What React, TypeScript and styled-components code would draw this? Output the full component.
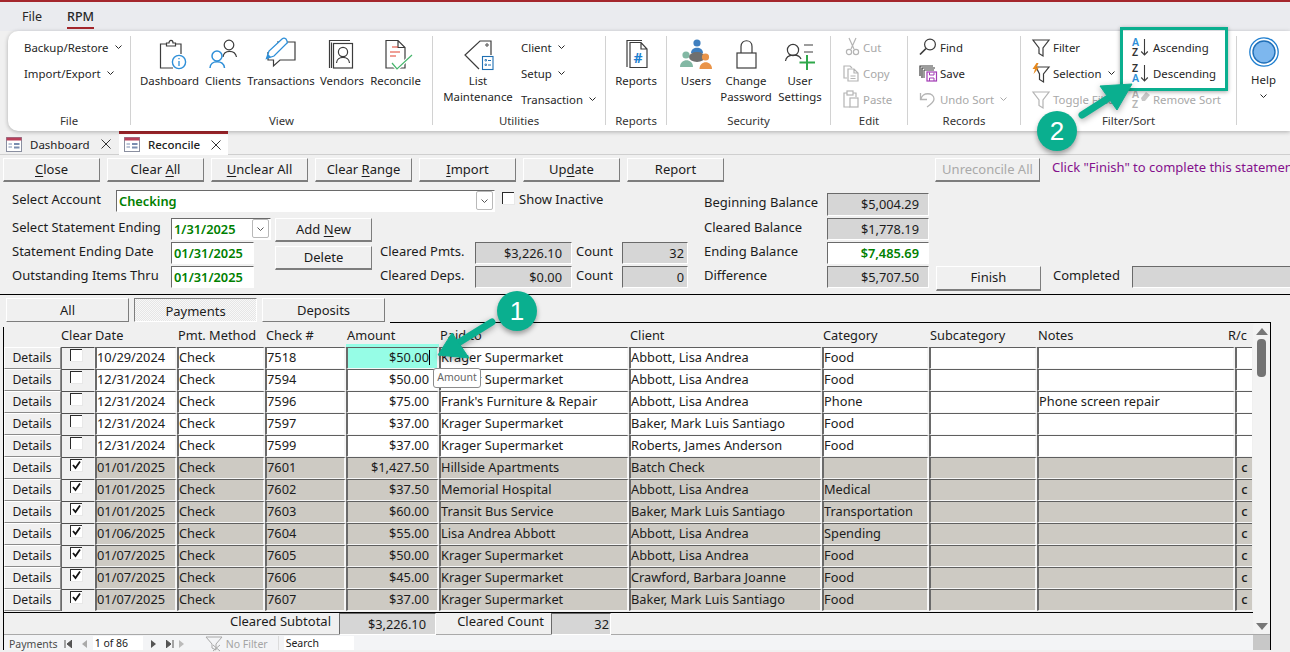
import React from "react";
import styled, { createGlobalStyle } from "styled-components";

const FONT = `"Noto Sans", "Open Sans", "Liberation Sans", sans-serif`;
const RED = "#a4262c";
const TEAL = "#0aaf8f";
const BLUE = "#2e8fd8";
const INK = "#3c3c3c";
const OFF = "#b4b4b4";

const Global = createGlobalStyle`
  html, body { margin: 0; padding: 0; background: #f0f0f0; }
  * { box-sizing: border-box; }
`;

const Page = styled.div`
  position: relative;
  width: 1290px;
  height: 652px;
  overflow: hidden;
  background: #f0f0f0;
  font-family: ${FONT};
  font-size: 13px;
  color: #1c1c1c;
`;

/* ---------- top menu ---------- */
const MenuBar = styled.div`
  display: flex;
  height: 31px;
  padding-left: 22px;
  gap: 25px;
  background: #eaebef;
  border-top: 2px solid ${RED};
`;
const MenuItem = styled.div<{ $on?: boolean }>`
  height: 27px;
  padding-top: 6px;
  font-size: 12.5px;
  line-height: 17px;
  color: #262626;
  font-weight: ${(p) => (p.$on ? 500 : 400)};
  border-bottom: ${(p) => (p.$on ? `2px solid ${RED}` : "2px solid transparent")};
`;

/* ---------- ribbon ---------- */
const Ribbon = styled.div`
  position: relative;
  z-index: 2;
  display: flex;
  height: 100px;
  margin-left: 8px;
  background: #fff;
  border-radius: 10px 0 0 10px;
  box-shadow: 0 1px 4px rgba(0, 0, 0, 0.28);
  color: #262626;
  font-size: 11.4px;
`;
const Group = styled.div<{ $w: number }>`
  display: flex;
  flex-direction: column;
  flex: none;
  width: ${(p) => p.$w}px;
`;
const GroupBody = styled.div<{ $pad?: number; $gap?: number }>`
  display: flex;
  flex: 1;
  padding-left: ${(p) => p.$pad ?? 0}px;
  gap: ${(p) => p.$gap ?? 0}px;
  min-height: 0;
`;
const GroupLabel = styled.div`
  height: 18px;
  line-height: 16px;
  text-align: center;
  color: #333;
`;
const Sep = styled.div`
  flex: none;
  width: 1px;
  margin: 5px 0 6px;
  background: #d2d2d2;
`;
const Large = styled.div<{ $w: number }>`
  display: flex;
  flex-direction: column;
  align-items: center;
  flex: none;
  width: ${(p) => p.$w}px;
  padding-top: 7px;
  line-height: 16px;
  text-align: center;
  white-space: nowrap;
`;
const IconBox = styled.div`
  height: 35px;
  width: 32px;
`;
const Icon = styled.svg`
  display: block;
  overflow: visible;
  fill: none;
`;
const SmallCol = styled.div<{ $w?: number }>`
  display: flex;
  flex-direction: column;
  flex: none;
  width: ${(p) => (p.$w ? `${p.$w}px` : "auto")};
  padding-top: 3px;
`;
const SmallRow = styled.div<{ $off?: boolean }>`
  display: flex;
  align-items: center;
  height: 26px;
  gap: 3px;
  white-space: nowrap;
  color: ${(p) => (p.$off ? "#a8a8a8" : "#262626")};
`;
const SmallIcon = styled.div`
  flex: none;
  width: 18px;
  height: 20px;
`;
const Chevron = styled.svg`
  flex: none;
  width: 7px;
  height: 4px;
  margin-left: 3px;
  fill: none;
  stroke: currentColor;
  stroke-width: 1;
`;
const HelpChevron = styled(Chevron)`
  margin: 6px 0 0;
`;

const Chev = () => (
  <Chevron viewBox="0 0 7 4">
    <path d="M0.5 0.5L3.5 3.5L6.5 0.5" />
  </Chevron>
);

const S = (p: { children: React.ReactNode; w?: number; h?: number }) => (
  <Icon width={p.w ?? 18} height={p.h ?? 20} viewBox={`0 0 ${p.w ?? 18} ${p.h ?? 20}`}>
    {p.children}
  </Icon>
);

const L = (p: { children: React.ReactNode }) => (
  <Icon width={32} height={32} viewBox="0 0 32 32">
    {p.children}
  </Icon>
);

const DashboardIcon = () => (
  <L>
    <g stroke={INK} strokeWidth="1.2">
      <path d="M12.5 6H6.5V30H19" />
      <path d="M21.5 6H27V16" />
      <path d="M12.5 8V5H15C15 1.5 19 1.5 19 5H21.5V8Z" />
    </g>
    <circle cx="25" cy="24" r="6.6" fill="#fff" stroke={BLUE} strokeWidth="1.4" />
    <path d="M25 23V28M25 20V21.2" stroke={BLUE} strokeWidth="1.3" />
  </L>
);
const ClientsIcon = () => (
  <L>
    <circle cx="22" cy="7" r="4.8" stroke={INK} strokeWidth="1.2" />
    <path d="M16 19C17 11.5 28 11.5 29.5 19" stroke={INK} strokeWidth="1.2" />
    <circle cx="10" cy="18" r="5" fill="#fff" stroke={BLUE} strokeWidth="1.5" />
    <path d="M3 30C3 21.5 17 21.5 17.5 30" stroke={BLUE} strokeWidth="1.5" />
  </L>
);
const TransactionsIcon = () => (
  <L>
    <path d="M12 4H30V22H15L8.5 28V22H3V14" stroke={INK} strokeWidth="1.2" />
    <path d="M1.5 20.5L4 13L17 1Q19-.6 21 1L22 3Q23 5 21 6L9 18Z" fill="#fff" stroke={BLUE} strokeWidth="1.3" />
    <path d="M1.5 20.5L3 16L6 19Z" fill={BLUE} />
  </L>
);
const VendorsIcon = () => (
  <L>
    <g stroke={INK} strokeWidth="1.2">
      <path d="M3.5 30V2.5H24" />
      <path d="M5.5 30V4.5" />
      <rect x="7.5" y="5.5" width="19" height="24.5" />
      <circle cx="17" cy="14" r="4.6" />
      <path d="M10.5 25C11 17.5 23 17.5 23.5 25" />
    </g>
  </L>
);
const ReconcileIcon = () => (
  <L>
    <path d="M6 2.5H18L25 9.5V30H6Z M18 2.5V9.5H25" stroke={INK} strokeWidth="1.2" />
    <path d="M12 9H18M10 14H20M10 18H16" stroke="#e0402e" strokeWidth="1.2" />
    <path d="M12 25L17 31L32 17" stroke="#fff" strokeWidth="3.5" />
    <path d="M12 25L17 31L32 17" stroke="#46b56c" strokeWidth="1.2" />
  </L>
);
const ListIcon = () => (
  <L>
    <path d="M17 31L3 17L18 3H29V17" stroke={INK} strokeWidth="1.2" />
    <circle cx="25" cy="7" r="1.2" stroke={INK} />
    <rect x="20.5" y="18.5" width="10.5" height="13" fill="#fff" stroke="#1f6fb2" strokeWidth="1.1" />
    <path d="M23 21.5H24.5V23H23ZM23 26H24.5V27.5H23Z" stroke="#1f6fb2" strokeWidth=".8" />
    <path d="M26 22.5H29M26 27H29" stroke="#1f6fb2" />
  </L>
);
const ReportsIcon = () => (
  <L>
    <path d="M7 29V2.5H22" stroke={INK} strokeWidth="1.2" />
    <path d="M10 4.5H21L27 11V29.5H10Z M21 4.5V11H27" stroke={INK} strokeWidth="1.2" />
    <text x="18" y="25" textAnchor="middle" fontFamily={FONT} fontSize="14" fontWeight="700" fill="#1c7fd0">
      #
    </text>
  </L>
);
const UsersIcon = () => (
  <L>
    <circle cx="17" cy="5" r="3.6" fill="#3f7fbf" />
    <path d="M11 15C11 8 23 8 23 15Z" fill="#3f7fbf" />
    <circle cx="6" cy="17" r="3.6" fill="#82b8a4" />
    <path d="M0 29C0 20 13 20 13 29Z" fill="#82b8a4" />
    <ellipse cx="17" cy="19" rx="8" ry="5" fill="#6f6f6f" />
    <circle cx="25.5" cy="19" r="3.6" fill="#ea9448" />
    <path d="M19.5 31C19.5 22 32 22 32 31Z" fill="#ea9448" />
  </L>
);
const LockIcon = () => (
  <L>
    <rect x="7" y="15" width="19" height="15" stroke={INK} strokeWidth="1.2" />
    <path d="M11 15V8.5C11 .8 22 .8 22 8.5V15" stroke={INK} strokeWidth="1.2" />
  </L>
);
const UserSettingsIcon = () => (
  <L>
    <circle cx="9" cy="12" r="5.6" stroke={INK} strokeWidth="1.2" />
    <path d="M1.5 23C2.5 15.5 15 15.5 17 21" stroke={INK} strokeWidth="1.2" />
    <path d="M20 7H29M20 14H29" stroke={INK} strokeWidth="1.2" />
    <path d="M23 17V32M15.5 24.5H31" stroke="#2ea84a" strokeWidth="2" />
  </L>
);
const CutIcon = () => (
  <S>
    <g stroke={OFF} strokeWidth="1.2">
      <path d="M7 1L12 12M14 1L9 12" />
      <circle cx="7" cy="15" r="2.6" />
      <circle cx="14" cy="15" r="2.6" />
    </g>
  </S>
);
const CopyIcon = () => (
  <S>
    <g stroke={OFF} strokeWidth="1.2">
      <path d="M5 15H2V3H8L10 5" />
      <path d="M6 6H12L16 10V18H6Z M12 6V10H16" fill="#fff" />
      <path d="M8.5 13H13.5M8.5 15.5H13.5" />
    </g>
  </S>
);
const PasteIcon = () => (
  <S>
    <g stroke={OFF} strokeWidth="1.2">
      <path d="M5 4H2V18H8" />
      <path d="M11 4H14V8" />
      <rect x="5" y="2" width="6" height="4" />
      <rect x="8" y="9" width="8" height="9" fill="#fff" />
    </g>
  </S>
);
const FindIcon = () => (
  <S>
    <circle cx="11" cy="7.5" r="5.4" stroke={INK} strokeWidth="1.2" />
    <path d="M7 11.5L1 17.5" stroke={INK} strokeWidth="1.7" />
  </S>
);
const SaveIcon = () => (
  <S>
    <path d="M1 13V3H14M3 15V5H16" stroke={INK} strokeWidth="1.2" />
    <path d="M5 15V7H15" stroke={INK} strokeWidth="1" />
    <rect x="8" y="9" width="9.5" height="9" fill="#fff" stroke="#a23bb5" strokeWidth="1.2" />
    <path d="M10.5 9.5V12H15V9.5M10.5 18V15H15V18" stroke="#a23bb5" />
  </S>
);
const UndoIcon = () => (
  <S>
    <path d="M2 10C3 3 15 3 15 10C15 13 11 16 8 18" stroke={OFF} strokeWidth="1.3" />
    <path d="M1.5 4V10.5H8" stroke={OFF} strokeWidth="1.3" />
  </S>
);
const FunnelPath = "M1 3H17L11 11V19L7 16.5V11Z";
const FilterIcon = ({ off }: { off?: boolean }) => (
  <S>
    <path d={FunnelPath} stroke={off ? OFF : INK} strokeWidth="1.2" />
  </S>
);
const SelectionIcon = () => (
  <S>
    <path d="M4 4H17L11.5 11V19L7.5 16.5V11Z" stroke={INK} strokeWidth="1.2" />
    <path d="M4.5 0L0.5 6H3L1.5 11L7 4.5H4.5L6.5 0Z" fill="#e8891c" />
  </S>
);
const SortLetters = styled.text<{ $c: string }>`
  font-family: ${FONT};
  font-size: 10.5px;
  font-weight: 600;
  fill: ${(p) => p.$c};
`;
const SortIcon = ({ first, second, fa, fb }: { first: string; second: string; fa: string; fb: string }) => (
  <S>
    <SortLetters $c={fa} x="0" y="9">
      {first}
    </SortLetters>
    <SortLetters $c={fb} x="0" y="19">
      {second}
    </SortLetters>
    <path d="M12.5 2V18M9.2 14.5L12.5 18L15.8 14.5" stroke={INK} strokeWidth="1.1" />
  </S>
);
const RemoveSortIcon = () => (
  <S>
    <SortLetters $c={OFF} x="0" y="9">
      A
    </SortLetters>
    <SortLetters $c={OFF} x="0" y="19">
      Z
    </SortLetters>
    <path d="M9 9L14 3L18 6L13 12H10Z" fill="#c8c8c8" />
  </S>
);
const HelpIcon = () => (
  <Icon width={32} height={32} viewBox="0 0 32 32">
    <circle cx="16" cy="16" r="14.2" stroke="#1f7fd0" strokeWidth="1.3" fill="#fff" />
    <circle cx="16" cy="16" r="11" fill="#7db7ee" stroke="#1f6fb8" strokeWidth="1.4" />
  </Icon>
);

const HelpBox = styled.div`
  display: flex;
  flex-direction: column;
  align-items: center;
  width: 53px;
  padding-top: 5px;
  line-height: 16px;
`;
const HelpText = styled.div`
  margin-top: 4px;
`;

/* ---------- document tabs ---------- */
const DocTabs = styled.div`
  display: flex;
  height: 24px;
  border-bottom: 1px solid #cfcfcf;
  background: #f0f0f0;
  font-size: 11.5px;
`;
const DocTab = styled.div<{ $on?: boolean; $w: number }>`
  display: flex;
  align-items: center;
  flex: none;
  width: ${(p) => p.$w}px;
  height: ${(p) => (p.$on ? "24px" : "23px")};
  margin-left: ${(p) => (p.$on ? "1px" : "0")};
  padding-left: ${(p) => (p.$on ? "5px" : "6px")};
  gap: 8px;
  background: ${(p) => (p.$on ? "#fff" : "transparent")};
  border-top: 3px solid ${(p) => (p.$on ? RED : "transparent")};
  font-weight: ${(p) => (p.$on ? 500 : 400)};
  color: #222;
`;
const DocClose = styled.svg`
  flex: none;
  width: 10px;
  height: 10px;
  margin-left: auto;
  margin-right: 7px;
  stroke: #333;
  stroke-width: 1;
`;
const FormIcon = () => (
  <Icon width={16} height={15} viewBox="0 0 16 15">
    <rect x=".5" y=".5" width="15" height="14" fill="#fff" stroke="#8a8fa0" />
    <rect x=".5" y=".5" width="15" height="3" fill="#b9405a" stroke="none" />
    <path d="M2.5 7H6M2.5 10H6" stroke="#7a8db0" />
    <rect x="8" y="6" width="5.5" height="2" fill="#7a8db0" />
    <rect x="8" y="9.5" width="5.5" height="2" fill="#7a8db0" />
  </Icon>
);

/* ---------- form header ---------- */
const FormHead = styled.div`
  height: 140px;
  border-bottom: 1px solid #000;
  overflow: hidden;
`;
const Toolbar = styled.div`
  display: flex;
  align-items: flex-start;
  gap: 7px;
  padding: 3px 0 0 3px;
  height: 27px;
`;
const RaisedBtn = styled.div<{ $w?: number; $h?: number; $off?: boolean; $ml?: number }>`
  flex: none;
  width: ${(p) => p.$w ?? 97}px;
  height: ${(p) => p.$h ?? 24}px;
  margin-left: ${(p) => p.$ml ?? 0}px;
  padding-bottom: 2px;
  display: flex;
  align-items: center;
  justify-content: center;
  background: #f0f0f0;
  border-top: 1px solid #fff;
  border-left: 1px solid #fff;
  border-right: 1px solid #7d7d7d;
  border-bottom: 2px solid #7d7d7d;
  color: ${(p) => (p.$off ? "#a9a9a9" : "#1c1c1c")};
  white-space: nowrap;
  u { text-underline-offset: 2px; }
`;
const Message = styled.div`
  flex: none;
  margin: 0 0 0 5px;
  line-height: 18px;
  color: #84108c;
  white-space: nowrap;
`;
const FormBody = styled.div`
  display: flex;
  align-items: flex-start;
  margin-top: 8px;
  padding-left: 12px;
`;
const LeftCol = styled.div`
  flex: none;
  width: 680px;
`;
const AccountRow = styled.div`
  display: flex;
  align-items: flex-start;
  height: 22px;
`;
const Label = styled.div<{ $w?: number }>`
  flex: none;
  width: ${(p) => (p.$w ? `${p.$w}px` : "auto")};
  line-height: 18px;
  white-space: nowrap;
`;
const Sunken = styled.div<{
  $w?: number;
  $bg?: string;
  $right?: boolean;
  $ink?: string;
  $bold?: boolean;
  $h?: number;
  $pr?: number;
  $ml?: number;
}>`
  display: flex;
  align-items: center;
  justify-content: ${(p) => (p.$right ? "flex-end" : "flex-start")};
  flex: none;
  width: ${(p) => (p.$w ? `${p.$w}px` : "100%")};
  height: ${(p) => p.$h ?? 22}px;
  margin-left: ${(p) => p.$ml ?? 0}px;
  padding: 0 ${(p) => p.$pr ?? 3}px 1px 2px;
  background: ${(p) => p.$bg ?? "#fff"};
  border-top: 1px solid #6a6a6a;
  border-left: 1px solid #6a6a6a;
  border-right: 1px solid #fff;
  border-bottom: 1px solid #fff;
  color: ${(p) => p.$ink ?? "#1c1c1c"};
  font-weight: ${(p) => (p.$bold ? 600 : 400)};
  font-size: 12.8px;
  white-space: nowrap;
  overflow: hidden;
`;
const DropBtn = styled.div`
  display: flex;
  align-items: center;
  justify-content: center;
  flex: none;
  margin-left: auto;
  margin-right: -2px;
  width: 17px;
  height: 19px;
  background: #fff;
  border: 1px solid #b9b9b9;
  border-radius: 2px;
  color: #555;
  svg { margin: 0; }
`;
const CheckBoxOuter = styled.div`
  flex: none;
  width: 12px;
  height: 12px;
  background: #fff;
  border-top: 1px solid #2a2a2a;
  border-left: 1px solid #2a2a2a;
  box-shadow: 1px 1px 0 #e8e8e8;
`;
const InactiveBox = styled(CheckBoxOuter)`
  margin: 2px 5px 0 7px;
`;
const LowerGrid = styled.div`
  display: grid;
  grid-template-columns: 159px 104px 97px 8px 95px 97px 50px 66px;
  grid-template-rows: repeat(3, 24px);
  margin-top: 6px;
`;
const GridLabel = styled.div<{ $col?: number }>`
  grid-column: ${(p) => p.$col ?? "auto"};
  line-height: 18px;
  white-space: nowrap;
`;
const CountLabel = styled(GridLabel)`
  padding-left: 4px;
`;
const BtnStack = styled.div`
  grid-column: 3;
  grid-row: 1 / 4;
  display: flex;
  flex-direction: column;
  gap: 4px;
`;
const BalanceGrid = styled.div`
  flex: none;
  display: grid;
  grid-template-columns: 123px 102px;
  grid-template-rows: 25px 24px 24px 24px;
  margin: 3px 0 0 12px;
`;
const BalanceLabel = styled.div`
  line-height: 18px;
  white-space: nowrap;
`;
const FinishBlock = styled.div`
  flex: none;
  display: flex;
  align-items: flex-start;
  margin: 76px 0 0 7px;
`;
const CompletedLabel = styled.div`
  flex: none;
  width: 79px;
  margin-left: 12px;
  line-height: 18px;
`;

/* ---------- tabs ---------- */
const TabRow = styled.div`
  display: flex;
  height: 28px;
  padding: 3px 0 0 6px;
  gap: 5px;
`;
const PageTab = styled.div<{ $on?: boolean }>`
  flex: none;
  display: flex;
  align-items: center;
  justify-content: center;
  width: 123px;
  height: 24px;
  padding-top: ${(p) => (p.$on ? "2px" : "0")};
  background: ${(p) =>
    p.$on ? "repeating-conic-gradient(#e6e6e6 0 25%, #f8f8f8 0 50%) 0 0 / 2px 2px" : "#f0f0f0"};
  border-top: 1px solid ${(p) => (p.$on ? "#7d7d7d" : "#fff")};
  border-left: 1px solid ${(p) => (p.$on ? "#7d7d7d" : "#fff")};
  border-right: 1px solid ${(p) => (p.$on ? "#fff" : "#7d7d7d")};
  border-bottom: 1px solid ${(p) => (p.$on ? "#fff" : "#7d7d7d")};
`;
const TabLine = styled.div`
  flex: none;
  width: 881px;
  height: 25px;
  border-bottom: 1px solid #000;
`;

/* ---------- subform ---------- */
const Subform = styled.div`
  position: relative;
  width: 1268px;
  margin-left: 3px;
  border-left: 1px solid #000;
  border-right: 1px solid #000;
  &::before {
    content: "";
    position: absolute;
    left: -1px;
    top: 0;
    width: 1px;
    height: 4px;
    background: #f0f0f0;
  }
`;
const SubformMain = styled.div`
  display: flex;
  height: 311px;
`;
const GridArea = styled.div`
  flex: none;
  width: 1249px;
`;
const COLS = "57px 34px 82px 88px 81px 93px 190px 193px 107px 108px 198px 17px";
const HeadRow = styled.div`
  display: grid;
  grid-template-columns: ${COLS};
  height: 24px;
  align-items: center;
  font-size: 12.8px;
`;
const HeadCell = styled.div<{ $rc?: boolean; $inset?: boolean }>`
  white-space: nowrap;
  justify-self: start;
  padding-left: ${(p) => (p.$inset ? "1px" : "0")};
  margin-left: ${(p) => (p.$rc ? "-7px" : "0")};
`;
const Row = styled.div`
  display: grid;
  grid-template-columns: ${COLS};
  height: 22px;
  font-size: 12.8px;
`;
const DetailsCell = styled.div`
  display: flex;
  align-items: center;
  justify-content: center;
  padding: 0 1px 2px 0;
  font-size: 12.2px;
  background: #f0f0f0;
  border-top: 1px solid #fff;
  border-left: 1px solid #fff;
  border-right: 1px solid #8a8a8a;
  border-bottom: 1px solid #8a8a8a;
`;
const CheckCell = styled.div`
  display: flex;
  justify-content: center;
  padding: 1px 5px 0 0;
  border-top: 1px solid #4f4f4f;
  border-left: 1px solid #6a6a6a;
  border-right: 1px solid #f6f6f6;
  background: #f0f0f0;
`;
const Tick = styled.svg`
  display: block;
  width: 11px;
  height: 11px;
  fill: none;
  stroke: #111;
  stroke-width: 1.8;
`;
const Cell = styled.div<{ $done?: boolean; $right?: boolean; $active?: boolean }>`
  display: flex;
  align-items: center;
  justify-content: ${(p) => (p.$right ? "flex-end" : "flex-start")};
  padding: 0 ${(p) => (p.$right ? "8px" : "1px")} 2px 0;
  background: ${(p) => (p.$active ? "#96fde6" : p.$done ? "#cdcac3" : "#fff")};
  box-shadow: ${(p) => (p.$active ? "0 -3px 0 #96fde6" : "none")};
  border-top: 1px solid #5f5f5f;
  border-left: 2px solid #6a6a6a;
  border-right: 2px solid #f6f6f6;
  border-bottom: 1px solid #f6f6f6;
  white-space: nowrap;
  overflow: hidden;
`;
const RcCell = styled(Cell)`
  justify-content: center;
  padding-right: 0;
  border-right: none;
  font-weight: 500;
`;
const Caret = styled.span`
  display: inline-block;
  width: 1px;
  height: 15px;
  margin-right: -1px;
  background: #000;
`;
const FootRow = styled.div`
  display: flex;
  height: 23px;
  border-top: 1px solid #000;
  margin-top: 1px;
`;
const FootLabel = styled.div<{ $w?: number; $ml?: number }>`
  flex: none;
  width: ${(p) => p.$w}px;
  margin-left: ${(p) => p.$ml ?? 0}px;
  line-height: 16px;
  text-align: right;
  white-space: nowrap;
`;
const ScrollCol = styled.div`
  flex: none;
  width: 17px;
  display: flex;
  flex-direction: column;
  align-items: center;
  padding: 5px 0 4px;
  background: #f3f3f3;
  border-radius: 4px;
`;
const Thumb = styled.div`
  width: 9px;
  height: 38px;
  margin-top: 4px;
  border-radius: 4px;
  background: #737373;
`;
const Tri = styled.div<{ $down?: boolean }>`
  flex: none;
  width: 0;
  height: 0;
  border-left: 6px solid transparent;
  border-right: 6px solid transparent;
  ${(p) => (p.$down ? "border-top: 7px solid #777; margin-top: auto;" : "border-bottom: 7px solid #777;")}
`;
const NavBar = styled.div`
  display: flex;
  align-items: flex-end;
  height: 16px;
  background: #f3f4f6;
  border-top: 1px solid #a9a9a9;
  font-size: 10.5px;
  line-height: 14px;
  color: #4c4c4c;
`;
const NavText = styled.div<{ $ml?: number; $off?: boolean }>`
  flex: none;
  margin: 0 0 -1px ${(p) => p.$ml ?? 0}px;
  color: ${(p) => (p.$off ? "#a4a4a4" : "#4c4c4c")};
  white-space: nowrap;
`;
const NavInput = styled.div<{ $ml: number; $w: number }>`
  flex: none;
  margin-left: ${(p) => p.$ml}px;
  width: ${(p) => p.$w}px;
  height: 14px;
  padding-left: 2px;
  background: #fff;
  color: #222;
`;
const NavGlyph = styled.svg<{ $ml: number }>`
  flex: none;
  margin: 0 0 2px ${(p) => p.$ml}px;
  width: 8px;
  height: 8px;
`;
const NavFilter = styled.svg`
  flex: none;
  margin: 0 0 -2px 18px;
  width: 18px;
  height: 16px;
  fill: none;
  stroke: #a8a8a8;
`;
const NavDivider = styled.div<{ $ml: number }>`
  flex: none;
  width: 1px;
  height: 14px;
  margin-left: ${(p) => p.$ml}px;
  background: #dcdcdc;
`;
const NavCorner = styled.div`
  margin-left: auto;
  flex: none;
  width: 17px;
  height: 15px;
  background: #c8c8c8;
`;

/* ---------- overlays ---------- */
const Highlight = styled.div`
  position: absolute;
  z-index: 5;
  left: 1120px;
  top: 27px;
  width: 108px;
  height: 64px;
  border: 3px solid ${TEAL};
  box-shadow: 0 1px 4px rgba(0, 0, 0, 0.35);
`;
const Overlay = styled.svg`
  position: absolute;
  z-index: 6;
  left: 0;
  top: 0;
  width: 1290px;
  height: 652px;
  pointer-events: none;
  filter: drop-shadow(0 2px 3px rgba(0, 0, 0, 0.35));
`;
const Badge = styled.div<{ $x: number; $y: number }>`
  position: absolute;
  z-index: 7;
  left: ${(p) => p.$x - 20}px;
  top: ${(p) => p.$y - 20}px;
  width: 40px;
  height: 40px;
  border-radius: 50%;
  display: flex;
  align-items: center;
  justify-content: center;
  background: ${TEAL};
  color: #fff;
  font-family: "Liberation Sans", Arial, sans-serif;
  font-size: 26px;
  box-shadow: 0 3px 5px rgba(0, 0, 0, 0.35);
`;
const Tooltip = styled.div`
  position: absolute;
  z-index: 4;
  left: 433px;
  top: 368px;
  width: 48px;
  height: 20px;
  background: #fff;
  border: 1px solid #8c8c8c;
  border-radius: 3px;
  font-size: 10.5px;
  line-height: 17px;
  text-align: center;
  color: #666;
`;

type Rec = { d: string; n: string; a: string; p: string; c: string; k?: string; note?: string; done?: boolean };
const K = "Krager Supermarket";
const A = "Abbott, Lisa Andrea";
const B = "Baker, Mark Luis Santiago";
const rows: Rec[] = [
  { d: "10/29/2024", n: "7518", a: "$50.00", p: K, c: A, k: "Food" },
  { d: "12/31/2024", n: "7594", a: "$50.00", p: K, c: A, k: "Food" },
  { d: "12/31/2024", n: "7596", a: "$75.00", p: "Frank's Furniture & Repair", c: A, k: "Phone", note: "Phone screen repair" },
  { d: "12/31/2024", n: "7597", a: "$37.00", p: K, c: B, k: "Food" },
  { d: "12/31/2024", n: "7599", a: "$37.00", p: K, c: "Roberts, James Anderson", k: "Food" },
  { d: "01/01/2025", n: "7601", a: "$1,427.50", p: "Hillside Apartments", c: "Batch Check", done: true },
  { d: "01/01/2025", n: "7602", a: "$37.50", p: "Memorial Hospital", c: A, k: "Medical", done: true },
  { d: "01/01/2025", n: "7603", a: "$60.00", p: "Transit Bus Service", c: B, k: "Transportation", done: true },
  { d: "01/06/2025", n: "7604", a: "$55.00", p: "Lisa Andrea Abbott", c: A, k: "Spending", done: true },
  { d: "01/07/2025", n: "7605", a: "$50.00", p: K, c: A, k: "Food", done: true },
  { d: "01/07/2025", n: "7606", a: "$45.00", p: K, c: "Crawford, Barbara Joanne", k: "Food", done: true },
  { d: "01/07/2025", n: "7607", a: "$37.00", p: K, c: B, k: "Food", done: true },
];

const heads = ["", "Clear", "Date", "Pmt. Method", "Check #", "Amount", "Paid to", "Client", "Category", "Subcategory", "Notes"];

const X = () => (
  <DocClose viewBox="0 0 10 10">
    <path d="M0.5 0.5L9.5 9.5M9.5 0.5L0.5 9.5" />
  </DocClose>
);

const DropChevron = () => (
  <DropBtn>
    <Chevron viewBox="0 0 7 4">
      <path d="M0.5 0.5L3.5 3.5L6.5 0.5" />
    </Chevron>
  </DropBtn>
);

export default function App() {
  return (
    <Page>
      <Global />
      <MenuBar>
        <MenuItem>File</MenuItem>
        <MenuItem $on>RPM</MenuItem>
      </MenuBar>

      <Ribbon>
        <Group $w={122}>
          <GroupBody $pad={16}>
            <SmallCol>
              <SmallRow>Backup/Restore<Chev /></SmallRow>
              <SmallRow>Import/Export<Chev /></SmallRow>
            </SmallCol>
          </GroupBody>
          <GroupLabel>File</GroupLabel>
        </Group>
        <Sep />
        <Group $w={301}>
          <GroupBody $pad={10} $gap={7}>
            <Large $w={57}><IconBox><DashboardIcon /></IconBox>Dashboard</Large>
            <Large $w={36}><IconBox><ClientsIcon /></IconBox>Clients</Large>
            <Large $w={66}><IconBox><TransactionsIcon /></IconBox>Transactions</Large>
            <Large $w={42}><IconBox><VendorsIcon /></IconBox>Vendors</Large>
            <Large $w={51}><IconBox><ReconcileIcon /></IconBox>Reconcile</Large>
          </GroupBody>
          <GroupLabel>View</GroupLabel>
        </Group>
        <Sep />
        <Group $w={172}>
          <GroupBody $pad={10} $gap={8}>
            <Large $w={70}><IconBox><ListIcon /></IconBox>List<br />Maintenance</Large>
            <SmallCol>
              <SmallRow>Client<Chev /></SmallRow>
              <SmallRow>Setup<Chev /></SmallRow>
              <SmallRow>Transaction<Chev /></SmallRow>
            </SmallCol>
          </GroupBody>
          <GroupLabel>Utilities</GroupLabel>
        </Group>
        <Sep />
        <Group $w={60}>
          <GroupBody>
            <Large $w={60}><IconBox><ReportsIcon /></IconBox>Reports</Large>
          </GroupBody>
          <GroupLabel>Reports</GroupLabel>
        </Group>
        <Sep />
        <Group $w={163}>
          <GroupBody $pad={7} $gap={6}>
            <Large $w={44}><IconBox><UsersIcon /></IconBox>Users</Large>
            <Large $w={44}><IconBox><LockIcon /></IconBox>Change<br />Password</Large>
            <Large $w={52}><IconBox><UserSettingsIcon /></IconBox>User<br />Settings</Large>
          </GroupBody>
          <GroupLabel>Security</GroupLabel>
        </Group>
        <Sep />
        <Group $w={76}>
          <GroupBody $pad={11}>
            <SmallCol>
              <SmallRow $off><SmallIcon><CutIcon /></SmallIcon>Cut</SmallRow>
              <SmallRow $off><SmallIcon><CopyIcon /></SmallIcon>Copy</SmallRow>
              <SmallRow $off><SmallIcon><PasteIcon /></SmallIcon>Paste</SmallRow>
            </SmallCol>
          </GroupBody>
          <GroupLabel>Edit</GroupLabel>
        </Group>
        <Sep />
        <Group $w={112}>
          <GroupBody $pad={11}>
            <SmallCol>
              <SmallRow><SmallIcon><FindIcon /></SmallIcon>Find</SmallRow>
              <SmallRow><SmallIcon><SaveIcon /></SmallIcon>Save</SmallRow>
              <SmallRow $off><SmallIcon><UndoIcon /></SmallIcon>Undo Sort<Chev /></SmallRow>
            </SmallCol>
          </GroupBody>
          <GroupLabel>Records</GroupLabel>
        </Group>
        <Sep />
        <Group $w={215}>
          <GroupBody $pad={11}>
            <SmallCol $w={100}>
              <SmallRow><SmallIcon><FilterIcon /></SmallIcon>Filter</SmallRow>
              <SmallRow><SmallIcon><SelectionIcon /></SmallIcon>Selection<Chev /></SmallRow>
              <SmallRow $off><SmallIcon><FilterIcon off /></SmallIcon>Toggle Filter</SmallRow>
            </SmallCol>
            <SmallCol>
              <SmallRow><SmallIcon><SortIcon first="A" second="Z" fa="#2e8fd8" fb="#333" /></SmallIcon>Ascending</SmallRow>
              <SmallRow><SmallIcon><SortIcon first="Z" second="A" fa="#333" fb="#2e8fd8" /></SmallIcon>Descending</SmallRow>
              <SmallRow $off><SmallIcon><RemoveSortIcon /></SmallIcon>Remove Sort</SmallRow>
            </SmallCol>
          </GroupBody>
          <GroupLabel>Filter/Sort</GroupLabel>
        </Group>
        <Sep />
        <HelpBox>
          <HelpIcon />
          <HelpText>Help</HelpText>
          <HelpChevron viewBox="0 0 7 4"><path d="M0.5 0.5L3.5 3.5L6.5 0.5" /></HelpChevron>
        </HelpBox>
      </Ribbon>

      <DocTabs>
        <DocTab $w={118}><FormIcon />Dashboard<X /></DocTab>
        <DocTab $w={109} $on><FormIcon />Reconcile<X /></DocTab>
      </DocTabs>

      <FormHead>
        <Toolbar>
          <RaisedBtn><span><u>C</u>lose</span></RaisedBtn>
          <RaisedBtn><span>Clear <u>A</u>ll</span></RaisedBtn>
          <RaisedBtn><span><u>U</u>nclear All</span></RaisedBtn>
          <RaisedBtn><span>Clear <u>R</u>ange</span></RaisedBtn>
          <RaisedBtn><span><u>I</u>mport</span></RaisedBtn>
          <RaisedBtn><span>Up<u>d</u>ate</span></RaisedBtn>
          <RaisedBtn><span>Report</span></RaisedBtn>
          <RaisedBtn $w={105} $off $ml={204}>Unreconcile All</RaisedBtn>
          <Message>Click "Finish" to complete this statement</Message>
        </Toolbar>
        <FormBody>
          <LeftCol>
            <AccountRow>
              <Label $w={104}>Select Account</Label>
              <Sunken $w={379} $ink="#008000" $bold>
                Checking
                <DropChevron />
              </Sunken>
              <InactiveBox />
              <Label>Show Inactive</Label>
            </AccountRow>
            <LowerGrid>
              <GridLabel $col={1}>Select Statement Ending</GridLabel>
              <Sunken $w={100} $ink="#008000" $bold>
                1/31/2025
                <DropChevron />
              </Sunken>
              <BtnStack>
                <RaisedBtn><span>Add <u>N</u>ew</span></RaisedBtn>
                <RaisedBtn>Delete</RaisedBtn>
              </BtnStack>
              <GridLabel $col={1}>Statement Ending Date</GridLabel>
              <Sunken $w={83} $ink="#008000" $bold>01/31/2025</Sunken>
              <GridLabel $col={5}>Cleared Pmts.</GridLabel>
              <Sunken $bg="#d6d6d6" $right $pr={9}>$3,226.10</Sunken>
              <CountLabel>Count</CountLabel>
              <Sunken $bg="#d6d6d6" $right>32</Sunken>
              <GridLabel $col={1}>Outstanding Items Thru</GridLabel>
              <Sunken $w={83} $ink="#008000" $bold>01/31/2025</Sunken>
              <GridLabel $col={5}>Cleared Deps.</GridLabel>
              <Sunken $bg="#d6d6d6" $right $pr={9}>$0.00</Sunken>
              <CountLabel>Count</CountLabel>
              <Sunken $bg="#d6d6d6" $right>0</Sunken>
            </LowerGrid>
          </LeftCol>
          <BalanceGrid>
            <BalanceLabel>Beginning Balance</BalanceLabel>
            <Sunken $bg="#d6d6d6" $right $h={23} $pr={9}>$5,004.29</Sunken>
            <BalanceLabel>Cleared Balance</BalanceLabel>
            <Sunken $bg="#d6d6d6" $right $pr={9}>$1,778.19</Sunken>
            <BalanceLabel>Ending Balance</BalanceLabel>
            <Sunken $right $ink="#008000" $bold $pr={9}>$7,485.69</Sunken>
            <BalanceLabel>Difference</BalanceLabel>
            <Sunken $bg="#d6d6d6" $right $pr={9}>$5,707.50</Sunken>
          </BalanceGrid>
          <FinishBlock>
            <RaisedBtn $w={105} $h={25}>Finish</RaisedBtn>
            <CompletedLabel>Completed</CompletedLabel>
            <Sunken $w={200} $bg="#d6d6d6" />
          </FinishBlock>
        </FormBody>
      </FormHead>

      <TabRow>
        <PageTab>All</PageTab>
        <PageTab $on>Payments</PageTab>
        <PageTab>Deposits</PageTab>
        <TabLine />
      </TabRow>

      <Subform>
        <SubformMain>
          <GridArea>
            <HeadRow>
              {heads.map((h, i) => (
                <HeadCell key={i} $inset={i > 2}>{h}</HeadCell>
              ))}
              <HeadCell $rc>R/c</HeadCell>
            </HeadRow>
            {rows.map((r, i) => (
              <Row key={r.n}>
                <DetailsCell>Details</DetailsCell>
                <CheckCell>
                  <CheckBoxOuter>
                    {r.done && (
                      <Tick viewBox="0 0 11 11">
                        <path d="M2 5L4.5 8L9 1.5" />
                      </Tick>
                    )}
                  </CheckBoxOuter>
                </CheckCell>
                <Cell $done={r.done}>{r.d}</Cell>
                <Cell $done={r.done}>Check</Cell>
                <Cell $done={r.done}>{r.n}</Cell>
                <Cell $done={r.done} $right $active={i === 0}>
                  {r.a}
                  {i === 0 && <Caret />}
                </Cell>
                <Cell $done={r.done}>{r.p}</Cell>
                <Cell $done={r.done}>{r.c}</Cell>
                <Cell $done={r.done}>{r.k}</Cell>
                <Cell $done={r.done} />
                <Cell $done={r.done}>{r.note}</Cell>
                <RcCell $done={r.done}>{r.done ? "c" : ""}</RcCell>
              </Row>
            ))}
            <FootRow>
              <FootLabel $w={327}>Cleared Subtotal</FootLabel>
              <Sunken $w={97} $ml={8} $bg="#d6d6d6" $right $pr={9}>$3,226.10</Sunken>
              <FootLabel $w={89} $ml={19}>Cleared Count</FootLabel>
              <Sunken $w={60} $ml={7} $bg="#d6d6d6" $right $pr={1}>32</Sunken>
            </FootRow>
          </GridArea>
          <ScrollCol>
            <Tri />
            <Thumb />
            <Tri $down />
          </ScrollCol>
        </SubformMain>
        <NavBar>
          <NavText $ml={5}>Payments</NavText>
          <NavGlyph $ml={6} viewBox="0 0 8 8"><path d="M1 0V8M8 0L3 4L8 8Z" stroke="#555" fill="#555" /></NavGlyph>
          <NavGlyph $ml={8} viewBox="0 0 8 8"><path d="M7 0L2 4L7 8Z" fill="#aaa" /></NavGlyph>
          <NavInput $ml={5} $w={50}>1 of 86</NavInput>
          <NavGlyph $ml={7} viewBox="0 0 8 8"><path d="M1 0L6 4L1 8Z" fill="#555" /></NavGlyph>
          <NavGlyph $ml={8} viewBox="0 0 8 8"><path d="M7 0V8M0 0L5 4L0 8Z" stroke="#555" fill="#555" /></NavGlyph>
          <NavGlyph $ml={5} viewBox="0 0 8 8"><path d="M0 0L5 4L0 8Z" fill="#bbb" /></NavGlyph>
          <NavFilter viewBox="0 0 18 16"><path d="M1 1H17L11 8V14L7 12V8Z" /><path d="M8 9L15 15M15 9L8 15" /></NavFilter>
          <NavText $ml={3} $off>No Filter</NavText>
          <NavDivider $ml={10} />
          <NavInput $ml={5} $w={70}>Search</NavInput>
          <NavCorner />
        </NavBar>
      </Subform>

      <Tooltip>Amount</Tooltip>
      <Highlight />
      <Overlay viewBox="0 0 1290 652">
        <g fill={TEAL} stroke={TEAL}>
          <path d="M492 322L458 343" strokeWidth="7" strokeLinecap="round" />
          <path d="M438 355L452 333L469 358Z" strokeWidth="1" />
          <path d="M1082 115L1107 99" strokeWidth="7" strokeLinecap="round" />
          <path d="M1132 84L1100 86L1117 110Z" strokeWidth="1" />
        </g>
      </Overlay>
      <Badge $x={517} $y={311}>1</Badge>
      <Badge $x={1057} $y={131}>2</Badge>
    </Page>
  );
}
